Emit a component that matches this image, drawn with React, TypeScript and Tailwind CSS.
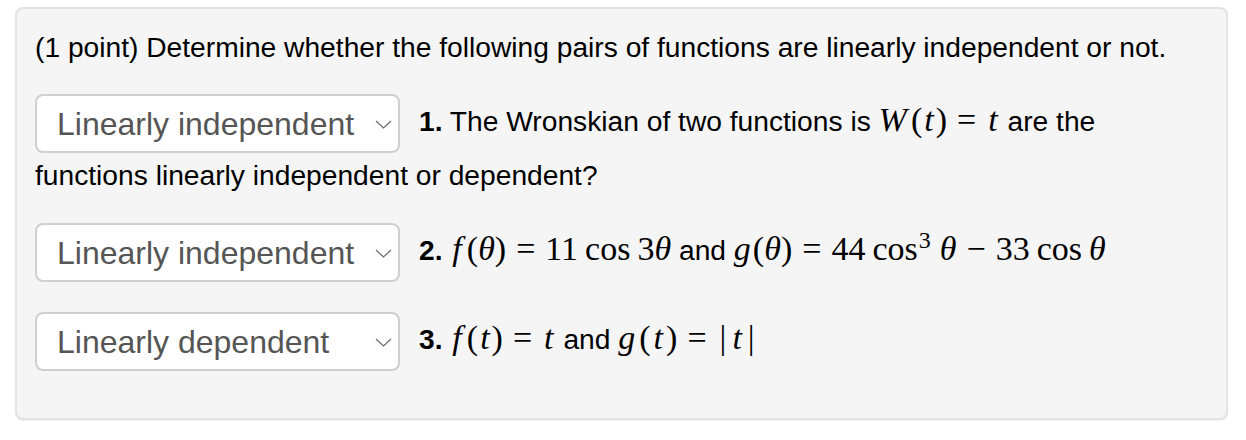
import React from "react";

function I({ children, cls = "" }: { children: React.ReactNode; cls?: string }) {
  return <span className={"italic " + cls}>{children}</span>;
}

function Op({ children }: { children: React.ReactNode }) {
  return <span className="mx-[10px]">{children}</span>;
}

function M({ children }: { children: React.ReactNode }) {
  return (
    <span className="text-[34px] font-['Liberation_Serif',serif]">{children}</span>
  );
}

function Select({ value, cls = "" }: { value: string; cls?: string }) {
  return (
    <span className={"relative inline-block align-middle mr-[19px] " + cls}>
      <select
        defaultValue={value}
        className="appearance-none w-[365px] h-[59px] rounded-[8px] border-2 border-[#cfcfcf] bg-white pl-[20px] pr-[40px] text-[32px] text-[#555555] font-['Liberation_Sans',Arial,sans-serif] outline-none"
      >
        <option>?</option>
        <option>Linearly independent</option>
        <option>Linearly dependent</option>
      </select>
      <svg
        className="pointer-events-none absolute right-[8px] top-[26px]"
        width="17"
        height="9"
        viewBox="0 0 17 9"
        fill="none"
      >
        <path d="M1 1 L8.5 8 L16 1" stroke="#6b6b6b" strokeWidth="1.2" />
      </svg>
    </span>
  );
}

export default function App() {
  return (
    <div className="bg-white w-[1246px] h-[440px] pt-[7px] pl-[15px] font-['Liberation_Sans',Arial,sans-serif] text-black">
      <div className="w-[1213px] h-[413px] rounded-[8px] border-2 border-[#e3e3e3] bg-[#f5f5f5] shadow-[0_1px_1px_rgba(0,0,0,0.06)] px-[18px] pt-[18px]">
        <p className="text-[28.2px] leading-[40px]">
          (1 point) Determine whether the following pairs of functions are linearly independent or not.
        </p>

        <div className="mt-[25px] text-[28.2px] leading-[40px]">
          <Select value="Linearly independent" cls="my-[2px]" />
          <b>1.</b> The Wronskian of two functions is{" "}
          <M>
            <I cls="mr-[4px]">W</I>(<I cls="mx-[2px]">t</I>)<Op>=</Op>
            <I cls="mx-[2px]">t</I>
          </M>{" "}
          are the functions linearly independent or dependent?
        </div>

        <div className="mt-[28px] text-[28.2px] leading-[40px]">
          <Select value="Linearly independent" />
          <b>2.</b>{" "}
          <M>
            <I cls="ml-[2px] mr-[5px]">f</I>(<I>θ</I>)<Op>=</Op>11
            <span className="ml-[7px]">cos</span>
            <span className="ml-[7px]">3</span>
            <I>θ</I>
          </M>{" "}
          and{" "}
          <M>
            <I cls="mr-[2px]">g</I>(<I>θ</I>)<Op>=</Op>44
            <span className="ml-[7px]">cos</span>
            <sup className="text-[24px] ml-[1px]">3</sup>
            <span className="ml-[9px]">
              <I>θ</I>
            </span>
            <Op>−</Op>33<span className="ml-[7px]">cos</span>
            <span className="ml-[7px]">
              <I>θ</I>
            </span>
          </M>
        </div>

        <div className="mt-[30px] text-[28.2px] leading-[40px]">
          <Select value="Linearly dependent" />
          <b>3.</b>{" "}
          <M>
            <I cls="ml-[2px] mr-[5px]">f</I>(<I cls="mx-[2px]">t</I>)<Op>=</Op>
            <I cls="mx-[2px]">t</I>
          </M>{" "}
          and{" "}
          <M>
            <I cls="mr-[4px]">g</I>(<I cls="mx-[3px]">t</I>)<Op>=</Op>
            <span className="mx-[3px]">|</span>
            <I cls="mx-[3px]">t</I>
            <span className="mx-[3px]">|</span>
          </M>
        </div>
      </div>
    </div>
  );
}
